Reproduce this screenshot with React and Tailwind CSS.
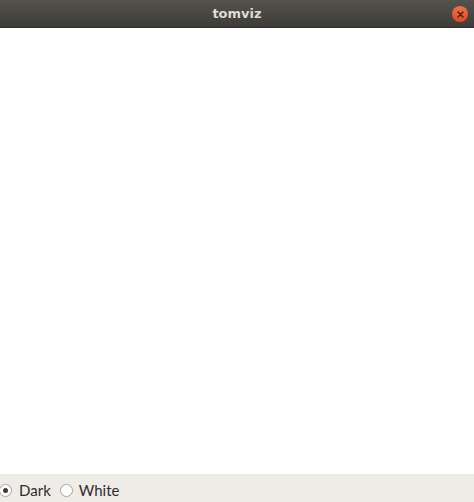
import React, { useState } from 'react';

function Radio({ checked, label, onClick, className }) {
  return (
    <button onClick={onClick} className={`flex items-center gap-[6px] ${className || ''}`}>
      <span className="w-[13px] h-[13px] rounded-full border border-[#a8a49e] bg-white flex items-center justify-center shrink-0">
        {checked && <span className="w-[5px] h-[5px] rounded-full bg-[#3c3c3c]" />}
      </span>
      <span className="text-[15px] text-[#2e2e2e] leading-none" style={{ fontFamily: 'Lato, "Noto Sans", sans-serif' }}>{label}</span>
    </button>
  );
}

export default function App() {
  const [theme, setTheme] = useState('dark');
  return (
    <div className="w-[474px] h-[502px] flex flex-col overflow-hidden" style={{ fontFamily: '"DejaVu Sans", "Noto Sans", sans-serif' }}>
      <div className="h-[28px] shrink-0 relative flex items-center justify-center bg-gradient-to-b from-[#54524c] to-[#3d3c38] border-b border-[#2d2c29]">
        <span className="text-[13px] font-bold text-[#dfdbd2]">tomviz</span>
        <span className="absolute right-[6px] top-[6px] w-[16px] h-[16px] rounded-full bg-gradient-to-b from-[#f0714a] to-[#df4a1c] flex items-center justify-center">
          <svg width="7" height="7" viewBox="0 0 7 7">
            <path d="M1 1 L6 6 M6 1 L1 6" stroke="#4a1a0a" strokeWidth="1.4" strokeLinecap="round" />
          </svg>
        </span>
      </div>
      <div className="flex-1 bg-white" />
      <div className="h-[28px] shrink-0 bg-[#efebe7] flex items-center pt-[5px] -ml-[1px]">
        <Radio checked={theme === 'dark'} label="Dark" onClick={() => setTheme('dark')} className="gap-[7px]" />
        <Radio checked={theme === 'white'} label="White" onClick={() => setTheme('white')} className="ml-[9px]" />
      </div>
    </div>
  );
}
